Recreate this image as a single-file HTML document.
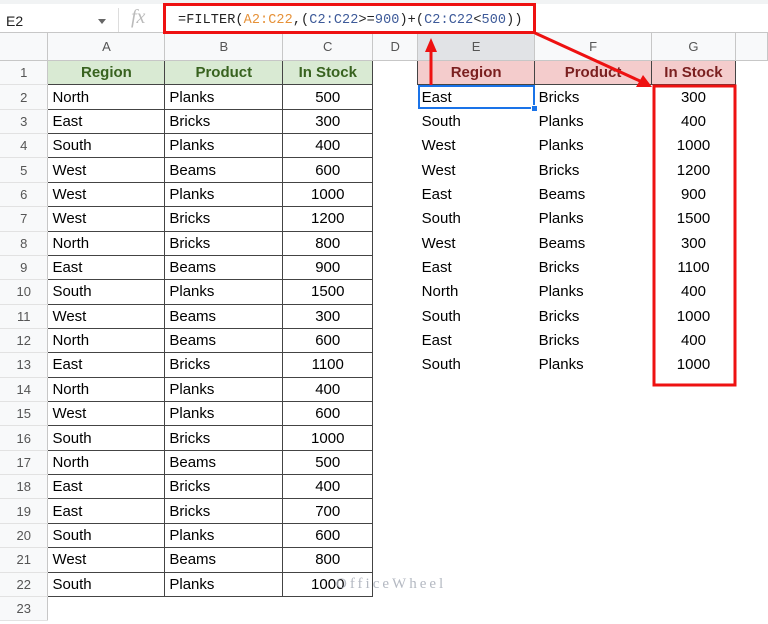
<!DOCTYPE html>
<html><head><style>
body{margin:0;width:768px;height:624px;overflow:hidden;background:#fff;font-family:"Liberation Sans",Arial,sans-serif;position:relative}
#fb{position:absolute;left:0;top:0;width:768px;height:33px;border-top:4px solid #f1f3f4;box-sizing:border-box;background:#fff;border-bottom:1px solid #c7c7c7}
#nb{position:absolute;left:6px;top:9px;font-size:14px;color:#222}
#dd{position:absolute;left:98px;top:15px;width:0;height:0;border-left:4px solid transparent;border-right:4px solid transparent;border-top:5px solid #666}
#sep{position:absolute;left:118px;top:4px;width:1px;height:24px;background:#ddd}
#fx{position:absolute;left:131px;top:2px;font-family:"Liberation Serif",serif;font-style:italic;font-size:20px;color:#bbb}
#fm{position:absolute;left:178px;top:9px;font-family:"Liberation Mono",monospace;font-size:13.5px;color:#222;letter-spacing:0.1px}
table{position:absolute;left:0;top:33px;border-collapse:collapse;table-layout:fixed;font-size:15px}
td{padding:0 4px;height:23.36px;white-space:nowrap;overflow:hidden;color:#000}
tr.h td{height:27px;background:#f8f9fa;color:#555;font-size:13px;text-align:center;border-right:1px solid #c7c7c7;border-bottom:1px solid #c7c7c7}
td.r{background:#f8f9fa;color:#555;font-size:13px;text-align:center;border-right:1px solid #c7c7c7;border-bottom:1px solid #e2e2e2}
.b{border:1px solid #444}
.c{text-align:center}
.g{background:#d9ead3;color:#38621f;font-weight:bold;text-align:center;border:1px solid #444}
.p{background:#f4cccc;color:#7a1f1f;font-weight:bold;text-align:center;border:1px solid #444}
</style></head><body>
<div id="fb"><div id="nb">E2</div><div id="dd"></div><div id="sep"></div><div id="fx">fx</div>
<div id="fm">=FILTER(<span style="color:#e69138">A2:C22</span>,(<span style="color:#3d5a99">C2:C22</span>&gt;=<span style="color:#3d5a99">900</span>)+(<span style="color:#3d5a99">C2:C22</span>&lt;<span style="color:#3d5a99">500</span>))</div></div>
<table>
<colgroup><col style="width:48px"><col style="width:117px"><col style="width:118px"><col style="width:90px"><col style="width:45px"><col style="width:117px"><col style="width:117px"><col style="width:84px"><col style="width:32px"></colgroup>
<tr class="h"><td></td><td>A</td><td>B</td><td>C</td><td>D</td><td style="background:#e1e3e6">E</td><td>F</td><td>G</td><td></td></tr>
<tr><td class="r">1</td><td class="g">Region</td><td class="g">Product</td><td class="g">In Stock</td><td></td><td class="p">Region</td><td class="p">Product</td><td class="p">In Stock</td><td></td></tr>
<tr><td class="r">2</td><td class="b">North</td><td class="b">Planks</td><td class="b c">500</td><td></td><td style="outline:2px solid #1a73e8;outline-offset:-2px">East</td><td>Bricks</td><td class="c">300</td><td></td></tr>
<tr><td class="r">3</td><td class="b">East</td><td class="b">Bricks</td><td class="b c">300</td><td></td><td>South</td><td>Planks</td><td class="c">400</td><td></td></tr>
<tr><td class="r">4</td><td class="b">South</td><td class="b">Planks</td><td class="b c">400</td><td></td><td>West</td><td>Planks</td><td class="c">1000</td><td></td></tr>
<tr><td class="r">5</td><td class="b">West</td><td class="b">Beams</td><td class="b c">600</td><td></td><td>West</td><td>Bricks</td><td class="c">1200</td><td></td></tr>
<tr><td class="r">6</td><td class="b">West</td><td class="b">Planks</td><td class="b c">1000</td><td></td><td>East</td><td>Beams</td><td class="c">900</td><td></td></tr>
<tr><td class="r">7</td><td class="b">West</td><td class="b">Bricks</td><td class="b c">1200</td><td></td><td>South</td><td>Planks</td><td class="c">1500</td><td></td></tr>
<tr><td class="r">8</td><td class="b">North</td><td class="b">Bricks</td><td class="b c">800</td><td></td><td>West</td><td>Beams</td><td class="c">300</td><td></td></tr>
<tr><td class="r">9</td><td class="b">East</td><td class="b">Beams</td><td class="b c">900</td><td></td><td>East</td><td>Bricks</td><td class="c">1100</td><td></td></tr>
<tr><td class="r">10</td><td class="b">South</td><td class="b">Planks</td><td class="b c">1500</td><td></td><td>North</td><td>Planks</td><td class="c">400</td><td></td></tr>
<tr><td class="r">11</td><td class="b">West</td><td class="b">Beams</td><td class="b c">300</td><td></td><td>South</td><td>Bricks</td><td class="c">1000</td><td></td></tr>
<tr><td class="r">12</td><td class="b">North</td><td class="b">Beams</td><td class="b c">600</td><td></td><td>East</td><td>Bricks</td><td class="c">400</td><td></td></tr>
<tr><td class="r">13</td><td class="b">East</td><td class="b">Bricks</td><td class="b c">1100</td><td></td><td>South</td><td>Planks</td><td class="c">1000</td><td></td></tr>
<tr><td class="r">14</td><td class="b">North</td><td class="b">Planks</td><td class="b c">400</td><td></td><td></td><td></td><td></td><td></td></tr>
<tr><td class="r">15</td><td class="b">West</td><td class="b">Planks</td><td class="b c">600</td><td></td><td></td><td></td><td></td><td></td></tr>
<tr><td class="r">16</td><td class="b">South</td><td class="b">Bricks</td><td class="b c">1000</td><td></td><td></td><td></td><td></td><td></td></tr>
<tr><td class="r">17</td><td class="b">North</td><td class="b">Beams</td><td class="b c">500</td><td></td><td></td><td></td><td></td><td></td></tr>
<tr><td class="r">18</td><td class="b">East</td><td class="b">Bricks</td><td class="b c">400</td><td></td><td></td><td></td><td></td><td></td></tr>
<tr><td class="r">19</td><td class="b">East</td><td class="b">Bricks</td><td class="b c">700</td><td></td><td></td><td></td><td></td><td></td></tr>
<tr><td class="r">20</td><td class="b">South</td><td class="b">Planks</td><td class="b c">600</td><td></td><td></td><td></td><td></td><td></td></tr>
<tr><td class="r">21</td><td class="b">West</td><td class="b">Beams</td><td class="b c">800</td><td></td><td></td><td></td><td></td><td></td></tr>
<tr><td class="r">22</td><td class="b">South</td><td class="b">Planks</td><td class="b c">1000</td><td></td><td></td><td></td><td></td><td></td></tr>
<tr><td class="r">23</td><td></td><td></td><td></td><td></td><td></td><td></td><td></td><td></td></tr>
</table>
<div style="position:absolute;left:531px;top:105px;width:5px;height:5px;background:#1a73e8;border:1px solid #fff"></div>
<div style="position:absolute;left:336px;top:576px;font-family:'Liberation Serif',serif;font-size:15px;letter-spacing:3px;color:#a8adb8;opacity:.85">OfficeWheel</div>
<svg style="position:absolute;left:0;top:0" width="768" height="624">
<rect x="164.5" y="4.5" width="370" height="28" fill="none" stroke="#ee1111" stroke-width="3"/>
<rect x="654" y="86" width="81" height="299" fill="none" stroke="#ee1111" stroke-width="3"/>
<line x1="431" y1="85" x2="431" y2="50" stroke="#ee1111" stroke-width="3"/>
<polygon points="431,38 425,52 437,52" fill="#ee1111"/>
<line x1="535" y1="33" x2="640" y2="81" stroke="#ee1111" stroke-width="3"/>
<polygon points="652,87 636,87 643,75" fill="#ee1111"/>
</svg>
</body></html>
